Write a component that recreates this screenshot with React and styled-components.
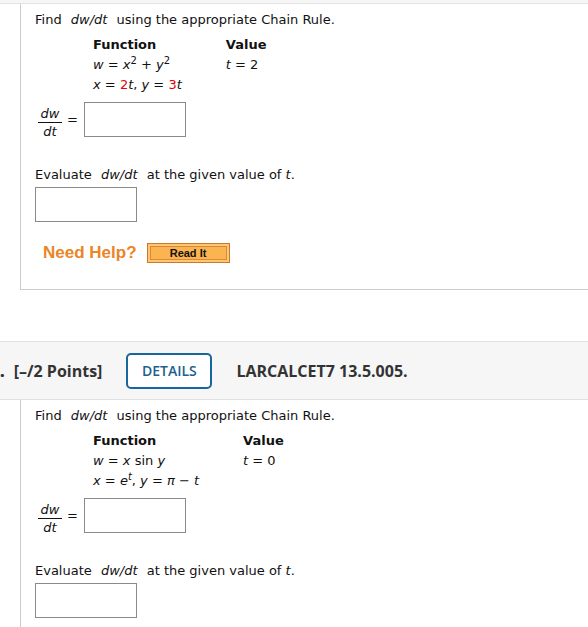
import React from "react";
import styled, { createGlobalStyle } from "styled-components";

const GlobalStyle = createGlobalStyle`
  body {
    margin: 0;
    background: #fff;
    font-family: "DejaVu Sans", Verdana, sans-serif;
    color: #111;
    overflow: hidden;
  }
`;

const Page = styled.div`
  width: 588px;
`;

const TopEdge = styled.div`
  height: 3px;
  background: #f6f6f6;
  border-bottom: 1px solid #e2e2e2;
`;

const Panel = styled.div`
  margin-left: 20px;
  border-left: 1px solid #cccccc;
  border-bottom: ${({ $open }) => ($open ? "none" : "1px solid #cccccc")};
  padding: 7px 0 ${({ $open }) => ($open ? "10px" : "26px")} 14px;
  font-size: 13px;
`;

const Prompt = styled.div`
  line-height: 17px;
  white-space: pre;
  margin-top: ${({ $gap }) => $gap || 0}px;
`;

const M = styled.span`
  font-style: italic;
  margin: 0 ${({ $pad }) => ($pad ? "5px" : "0")};
`;

const Red = styled.span`
  color: #e30000;
`;

const Sup = styled.sup`
  font-size: 10px;
  line-height: 0;
  vertical-align: 5px;
  font-style: ${({ $italic }) => ($italic ? "italic" : "normal")};
`;

const Table = styled.table`
  border-collapse: collapse;
  margin: 6px 0 0 58px;
  td,
  th {
    padding: 0 44px 0 0;
    height: 20px;
    text-align: left;
    white-space: nowrap;
    vertical-align: middle;
  }
  th {
    font-weight: bold;
  }
`;

const AnswerRow = styled.div`
  display: flex;
  align-items: center;
  margin-top: 8px;
`;

const Fraction = styled.div`
  display: flex;
  flex-direction: column;
  align-items: center;
  font-style: italic;
  margin: 3px 0 -3px 3px;
  width: 24px;
  line-height: 17px;
  span + span {
    border-top: 1px solid #111;
    align-self: stretch;
    text-align: center;
  }
`;

const Equals = styled.span`
  margin: 0 6px 0 5px;
`;

const Box = styled.div`
  width: 100px;
  height: 33px;
  border: 1px solid #8a8a8a;
  background: #fff;
  margin-top: ${({ $gap }) => $gap || 0}px;
`;

const HelpRow = styled.div`
  display: flex;
  align-items: center;
  gap: 10px;
  margin: 21px 0 0 8px;
  height: 20px;
`;

const NeedHelp = styled.span`
  font-family: "Liberation Sans", Arial, sans-serif;
  font-weight: bold;
  font-size: 17px;
  color: #ec8525;
`;

const ReadIt = styled.button`
  width: 83px;
  height: 20px;
  padding: 0;
  background: #fbb44f;
  border: 1px solid #cd7828;
  box-shadow: inset 0 0 0 2px #fdc873, inset 0 0 0 3px #d98a3c;
  font-family: "Liberation Sans", Arial, sans-serif;
  font-weight: bold;
  font-size: 11px;
  color: #111;
`;

const Header = styled.div`
  margin-top: 51px;
  height: 57px;
  background: #f6f6f6;
  border-top: 1px solid #e0e0e0;
  border-bottom: 1px solid #e0e0e0;
  display: flex;
  align-items: center;
  font-family: "Open Sans", sans-serif;
  color: #333;
`;

const Points = styled.span`
  font-weight: bold;
  font-size: 16px;
  margin-right: 24px;
  white-space: nowrap;
  b {
    margin-right: 9px;
  }
`;

const DetailsButton = styled.button`
  width: 86px;
  height: 36px;
  border: 2px solid #17669c;
  border-radius: 5px;
  background: #fff;
  color: #1d5f8e;
  font-family: "Open Sans", sans-serif;
  font-weight: 600;
  font-size: 14px;
  padding: 0;
  margin-right: 24px;
`;

const Code = styled.span`
  font-weight: bold;
  font-size: 16px;
`;

const Question = ({ func, value, open }) => (
  <Panel $open={open}>
    <Prompt>
      Find <M $pad>dw/dt</M> using the appropriate Chain Rule.
    </Prompt>
    <Table>
      <tbody>
        <tr>
          <th>Function</th>
          <th>Value</th>
        </tr>
        <tr>
          <td>{func[0]}</td>
          <td>{value}</td>
        </tr>
        <tr>
          <td>{func[1]}</td>
          <td />
        </tr>
      </tbody>
    </Table>
    <AnswerRow>
      <Fraction>
        <span>dw</span>
        <span>dt</span>
      </Fraction>
      <Equals>=</Equals>
      <Box />
    </AnswerRow>
    <Prompt $gap={29}>
      Evaluate <M $pad>dw/dt</M> at the given value of <M>t</M>.
    </Prompt>
    <Box $gap={4} />
    {!open && (
      <HelpRow>
        <NeedHelp>Need Help?</NeedHelp>
        <ReadIt>Read It</ReadIt>
      </HelpRow>
    )}
  </Panel>
);

export default function App() {
  return (
    <Page>
      <GlobalStyle />
      <TopEdge />
      <Question
        func={[
          <>
            <M>w</M> = <M>x</M>
            <Sup>2</Sup> + <M>y</M>
            <Sup>2</Sup>
          </>,
          <>
            <M>x</M> = <Red>2</Red>
            <M>t</M>, <M>y</M> = <Red>3</Red>
            <M>t</M>
          </>,
        ]}
        value={
          <>
            <M>t</M> = 2
          </>
        }
      />
      <Header>
        <Points>
          <b>.</b>[–/2 Points]
        </Points>
        <DetailsButton>DETAILS</DetailsButton>
        <Code>LARCALCET7 13.5.005.</Code>
      </Header>
      <Question
        open
        func={[
          <>
            <M>w</M> = <M>x</M> sin <M>y</M>
          </>,
          <>
            <M>x</M> = <M>e</M>
            <Sup $italic>t</Sup>, <M>y</M> = <M>π</M> − <M>t</M>
          </>,
        ]}
        value={
          <>
            <M>t</M> = 0
          </>
        }
      />
    </Page>
  );
}
